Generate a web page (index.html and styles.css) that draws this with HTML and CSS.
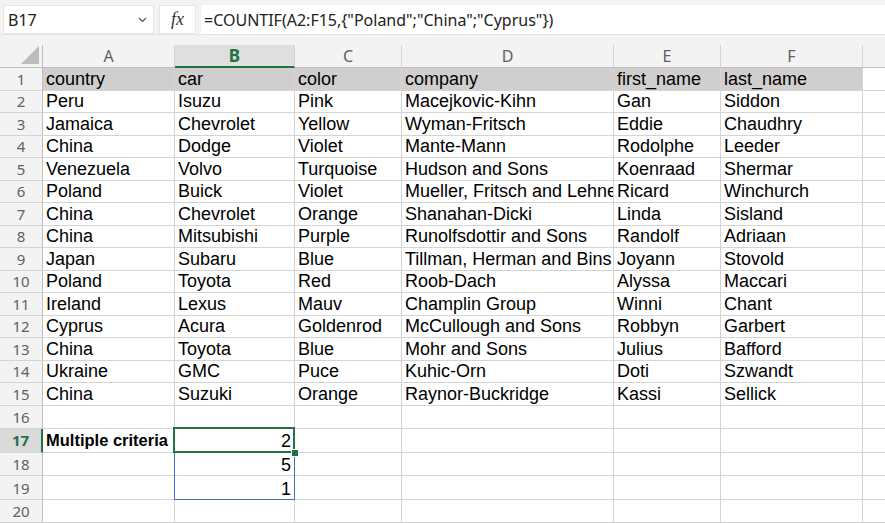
FILE: index.html
```html
<!DOCTYPE html>
<html lang="en">
<head>
    <meta charset="UTF-8">
    <title>COUNTIF - multiple criteria</title>
    <link rel="stylesheet" href="styles.css">
</head>
<body>
    <div class="formula-bar">
        <div class="name-box">
            <span>B17</span>
            <svg class="chevron" width="9" height="6" viewBox="0 0 9 6"><path d="M1 1l3.5 3.5L8 1" fill="none" stroke="#555" stroke-width="1.2"/></svg>
        </div>
        <div class="fx-box"><span class="fx">fx</span></div>
        <div class="formula-input">=COUNTIF(A2:F15,{"Poland";"China";"Cyprus"})</div>
    </div>

    <div class="sheet">
        <table class="grid">
            <colgroup>
                <col class="c-rh"><col class="c-a"><col class="c-b"><col class="c-c"><col class="c-d"><col class="c-e"><col class="c-f"><col class="c-g">
            </colgroup>
            <thead>
                <tr>
                    <th class="corner"><span class="corner-tri"></span></th>
                    <th>A</th><th class="col-sel">B</th><th>C</th><th>D</th><th>E</th><th>F</th><th></th>
                </tr>
            </thead>
            <tbody>
                <tr class="head-row"><td class="rh">1</td><td class="hd">country</td><td class="hd">car</td><td class="hd">color</td><td class="hd">company</td><td class="hd">first_name</td><td class="hd">last_name</td><td></td></tr>
                <tr><td class="rh">2</td><td>Peru</td><td>Isuzu</td><td>Pink</td><td>Macejkovic-Kihn</td><td>Gan</td><td>Siddon</td><td></td></tr>
                <tr><td class="rh">3</td><td>Jamaica</td><td>Chevrolet</td><td>Yellow</td><td>Wyman-Fritsch</td><td>Eddie</td><td>Chaudhry</td><td></td></tr>
                <tr><td class="rh">4</td><td>China</td><td>Dodge</td><td>Violet</td><td>Mante-Mann</td><td>Rodolphe</td><td>Leeder</td><td></td></tr>
                <tr><td class="rh">5</td><td>Venezuela</td><td>Volvo</td><td>Turquoise</td><td>Hudson and Sons</td><td>Koenraad</td><td>Shermar</td><td></td></tr>
                <tr><td class="rh">6</td><td>Poland</td><td>Buick</td><td>Violet</td><td>Mueller, Fritsch and Lehner</td><td>Ricard</td><td>Winchurch</td><td></td></tr>
                <tr><td class="rh">7</td><td>China</td><td>Chevrolet</td><td>Orange</td><td>Shanahan-Dicki</td><td>Linda</td><td>Sisland</td><td></td></tr>
                <tr><td class="rh">8</td><td>China</td><td>Mitsubishi</td><td>Purple</td><td>Runolfsdottir and Sons</td><td>Randolf</td><td>Adriaan</td><td></td></tr>
                <tr><td class="rh">9</td><td>Japan</td><td>Subaru</td><td>Blue</td><td>Tillman, Herman and Bins</td><td>Joyann</td><td>Stovold</td><td></td></tr>
                <tr><td class="rh">10</td><td>Poland</td><td>Toyota</td><td>Red</td><td>Roob-Dach</td><td>Alyssa</td><td>Maccari</td><td></td></tr>
                <tr><td class="rh">11</td><td>Ireland</td><td>Lexus</td><td>Mauv</td><td>Champlin Group</td><td>Winni</td><td>Chant</td><td></td></tr>
                <tr><td class="rh">12</td><td>Cyprus</td><td>Acura</td><td>Goldenrod</td><td>McCullough and Sons</td><td>Robbyn</td><td>Garbert</td><td></td></tr>
                <tr><td class="rh">13</td><td>China</td><td>Toyota</td><td>Blue</td><td>Mohr and Sons</td><td>Julius</td><td>Bafford</td><td></td></tr>
                <tr><td class="rh">14</td><td>Ukraine</td><td>GMC</td><td>Puce</td><td>Kuhic-Orn</td><td>Doti</td><td>Szwandt</td><td></td></tr>
                <tr><td class="rh">15</td><td>China</td><td>Suzuki</td><td>Orange</td><td>Raynor-Buckridge</td><td>Kassi</td><td>Sellick</td><td></td></tr>
                <tr class="tall"><td class="rh">16</td><td></td><td></td><td></td><td></td><td></td><td></td><td></td></tr>
                <tr class="tall"><td class="rh row-sel">17</td><td class="label">Multiple criteria</td><td class="num active">2<span class="range"></span><span class="fill-handle"></span></td><td></td><td></td><td></td><td></td><td></td></tr>
                <tr class="tall"><td class="rh">18</td><td></td><td class="num">5</td><td></td><td></td><td></td><td></td><td></td></tr>
                <tr class="tall"><td class="rh">19</td><td></td><td class="num">1</td><td></td><td></td><td></td><td></td><td></td></tr>
                <tr class="tall"><td class="rh">20</td><td></td><td></td><td></td><td></td><td></td><td></td><td></td></tr>
            </tbody>
        </table>
    </div>
</body>
</html>
```

FILE: styles.css
```css
body {
    margin: 0;
    background-color: #fff;
    font-family: "Liberation Sans", Arial, sans-serif;
    overflow: hidden;
}

/* formula bar */
.formula-bar {
    display: flex;
    gap: 5px;
    height: 29px;
    padding: 5px 0 0 3px;
    background-color: #f3f3f3;
    border-bottom: 1px solid #e3e3e3;
    font-family: "Noto Sans", "Open Sans", sans-serif;
    font-size: 16px;
    color: #222;
}
.name-box {
    width: 151px;
    box-sizing: border-box;
    display: flex;
    align-items: center;
    justify-content: space-between;
    padding: 0 6px 0 4px;
    background-color: #fff;
    border: 1px solid #e6e6e6;
}
.fx-box {
    width: 37px;
    display: flex;
    align-items: center;
    justify-content: center;
    background-color: #fff;
    border: 1px solid #e6e6e6;
    box-sizing: border-box;
}
.fx {
    font-family: "Liberation Serif", serif;
    font-style: italic;
    font-size: 18px;
    color: #333;
}
.formula-input {
    flex: 1;
    display: flex;
    align-items: center;
    padding-left: 3px;
    background-color: #fff;
    white-space: nowrap;
}

/* sheet grid */
.sheet {
    background-color: #f3f3f3;
    padding-top: 10px;
}
.grid {
    border-collapse: separate;
    border-spacing: 0;
    table-layout: fixed;
    width: 903px;
}
.c-rh { width: 43px; }
.c-a { width: 132px; }
.c-b { width: 120px; }
.c-c { width: 107px; }
.c-d { width: 212px; }
.c-e { width: 107px; }
.c-f { width: 142px; }
.c-g { width: 40px; }

.grid th,
.grid td {
    box-sizing: border-box;
    padding: 0 3px;
    border-right: 1px solid #d4d4d4;
    border-bottom: 1px solid #d4d4d4;
    white-space: nowrap;
    overflow: hidden;
    text-align: left;
}
.grid thead tr {
    height: 23px;
}
.grid th {
    background-color: #f3f3f3;
    font-family: "Noto Sans", "Open Sans", sans-serif;
    font-size: 16px;
    font-weight: normal;
    color: #5f5f5f;
    text-align: center;
    line-height: 20px;
    border-bottom-color: #bfbfbf;
}
.grid th.corner {
    position: relative;
    border-right-color: #bfbfbf;
}
.corner-tri {
    position: absolute;
    right: 3px;
    bottom: 3px;
    width: 0;
    height: 0;
    border-left: 18px solid transparent;
    border-bottom: 18px solid #bcbcbc;
}
.grid th.col-sel {
    background-color: #dfdfdf;
    color: #217346;
    font-weight: bold;
    font-size: 17px;
    border-bottom: 2px solid #217346;
}

.grid tbody tr {
    height: 22.5px;
}
.grid tbody tr.tall {
    height: 23.6px;
}
.grid td {
    background-color: #fff;
    font-size: 18px;
    line-height: 20px;
    color: #000;
}
.grid td.rh {
    background-color: #f3f3f3;
    text-align: center;
    font-family: "Noto Sans", "Open Sans", sans-serif;
    font-size: 15px;
    color: #616161;
    border-right-color: #bfbfbf;
}
.grid td.row-sel {
    background-color: #dadada;
    color: #217346;
    font-weight: bold;
    border-right: 2px solid #217346;
}
.grid td.hd {
    background-color: #d0cece;
}
.grid td.label {
    font-size: 16.5px;
    font-weight: bold;
}
.grid td.num {
    text-align: right;
    padding-top: 2px;
}

/* selection */
.grid td.active {
    position: relative;
    overflow: visible;
}
.grid td.active::after {
    content: "";
    position: absolute;
    top: -2px;
    left: -2px;
    right: -1px;
    bottom: -1px;
    border: 2px solid #217346;
    z-index: 2;
}
.range {
    position: absolute;
    top: -1px;
    left: -1px;
    right: -1px;
    height: 72px;
    border: 1px solid #3a6fc8;
    box-sizing: border-box;
    z-index: 1;
}
.fill-handle {
    position: absolute;
    right: -5px;
    bottom: -5px;
    width: 6px;
    height: 6px;
    background-color: #217346;
    border: 1px solid #fff;
    z-index: 3;
}
```
